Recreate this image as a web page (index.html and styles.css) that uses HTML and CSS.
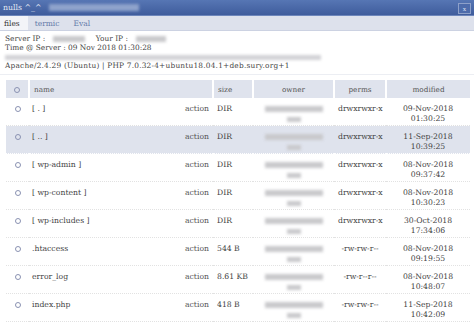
FILE: index.html
```html
<!DOCTYPE html>
<html>
<head>
<meta charset="utf-8">
<link rel="stylesheet" href="styles.css">
</head>
<body>
<div class="titlebar">
  <span class="title">nulls ^_^</span>
  <span class="blur title-blur"></span>
  <span class="close">x</span>
</div>
<div class="tabs">
  <span class="tab active">files</span>
  <span class="tab">termic</span>
  <span class="tab">Eval</span>
</div>
<div class="info">
  <div class="line">Server IP : <span class="blur ip"></span> Your IP : <span class="blur ip2"></span></div>
  <div class="line">Time @ Server : 09 Nov 2018 01:30:28</div>
  <div class="line"><span class="blur uname"></span></div>
  <div class="line wide">Apache/2.4.29 (Ubuntu) | PHP 7.0.32-4+ubuntu18.04.1+deb.sury.org+1</div>
</div>
<table class="files">
  <colgroup>
    <col class="c-radio"><col class="c-name"><col class="c-size"><col class="c-owner"><col class="c-perms"><col class="c-mod">
  </colgroup>
  <thead>
    <tr><th><span class="radio"></span></th><th class="left">name</th><th class="left">size</th><th>owner</th><th>perms</th><th>modified</th></tr>
  </thead>
  <tbody>
    <tr><td><span class="radio"></span></td><td class="name"><span>[ . ]</span><span class="act">action</span></td><td>DIR</td><td><div class="own"><span class="blur o1"></span><span class="blur o2"></span></div></td><td class="c">drwxrwxr-x</td><td class="c">09-Nov-2018<br>01:30:25</td></tr>
    <tr class="sel"><td><span class="radio"></span></td><td class="name"><span>[ .. ]</span><span class="act">action</span></td><td>DIR</td><td><div class="own"><span class="blur o1"></span><span class="blur o2"></span></div></td><td class="c">drwxrwxr-x</td><td class="c">11-Sep-2018<br>10:39:25</td></tr>
    <tr><td><span class="radio"></span></td><td class="name"><span>[ wp-admin ]</span><span class="act">action</span></td><td>DIR</td><td><div class="own"><span class="blur o1"></span><span class="blur o2"></span></div></td><td class="c">drwxrwxr-x</td><td class="c">08-Nov-2018<br>09:37:42</td></tr>
    <tr><td><span class="radio"></span></td><td class="name"><span>[ wp-content ]</span><span class="act">action</span></td><td>DIR</td><td><div class="own"><span class="blur o1"></span><span class="blur o2"></span></div></td><td class="c">drwxrwxr-x</td><td class="c">08-Nov-2018<br>10:30:23</td></tr>
    <tr><td><span class="radio"></span></td><td class="name"><span>[ wp-includes ]</span><span class="act">action</span></td><td>DIR</td><td><div class="own"><span class="blur o1"></span><span class="blur o2"></span></div></td><td class="c">drwxrwxr-x</td><td class="c">30-Oct-2018<br>17:34:06</td></tr>
    <tr><td><span class="radio"></span></td><td class="name"><span>.htaccess</span><span class="act">action</span></td><td>544 B</td><td><div class="own"><span class="blur o1"></span><span class="blur o2"></span></div></td><td class="c">-rw-rw-r--</td><td class="c">08-Nov-2018<br>09:19:55</td></tr>
    <tr><td><span class="radio"></span></td><td class="name"><span>error_log</span><span class="act">action</span></td><td>8.61 KB</td><td><div class="own"><span class="blur o1"></span><span class="blur o2"></span></div></td><td class="c">-rw-r--r--</td><td class="c">08-Nov-2018<br>10:48:07</td></tr>
    <tr><td><span class="radio"></span></td><td class="name"><span>index.php</span><span class="act">action</span></td><td>418 B</td><td><div class="own"><span class="blur o1"></span><span class="blur o2"></span></div></td><td class="c">-rw-rw-r--</td><td class="c">11-Sep-2018<br>10:42:09</td></tr>
  </tbody>
</table>
</body>
</html>
```
FILE: styles.css
```css
html, body {
  margin: 0;
  padding: 0;
  background: #fff;
}
body {
  font-family: "DejaVu Serif", serif;
  font-size: 7px;
  color: #444;
  overflow: hidden;
}
.blur {
  display: inline-block;
  background: #c9c9cc;
  filter: blur(1.5px);
  vertical-align: middle;
}
.titlebar {
  height: 15px;
  background: linear-gradient(#5676b4, #3f5c9c);
  display: flex;
  align-items: center;
  padding-left: 3px;
  position: relative;
  border-bottom: 1px solid #6d86bb;
}
.title {
  color: #e6ebf5;
  font-size: 7.8px;
  white-space: pre;
}
.title-blur {
  width: 90px;
  height: 7px;
  margin-left: 8px;
  background: #8fa3cc;
}
.close {
  position: absolute;
  right: 3px;
  top: 3px;
  width: 11px;
  height: 9px;
  border: 1px solid #8da0c9;
  color: #dde4f2;
  font-size: 6px;
  line-height: 9px;
  text-align: center;
  background: #4d6bab;
}
.tabs {
  height: 14px;
  background: #dde1ec;
  display: flex;
  align-items: stretch;
  border-bottom: 1px solid #ccd2e2;
}
.tab {
  display: flex;
  align-items: center;
  padding: 0 7px;
  color: #6379a8;
  font-size: 7.5px;
}
.tab.active {
  background: #f3f4f8;
  color: #333;
  padding: 0 8px 0 4px;
}
.info {
  padding: 3px 5px 4px;
  border-bottom: 1px solid #eceef3;
  margin-bottom: 5px;
}
.line {
  height: 9px;
  line-height: 9px;
  font-size: 7.4px;
  white-space: nowrap;
}
.line.wide { letter-spacing: 0.2px; }
.ip { width: 32px; height: 6px; margin: 0 8px 0 6px; }
.ip2 { width: 30px; height: 6px; margin-left: 6px; }
.uname { width: 316px; height: 5px; background: #d2d2d6; }
.files {
  margin-left: 6px;
  width: 464px;
  border-collapse: collapse;
  table-layout: fixed;
}
.c-radio { width: 23px; }
.c-name { width: 184px; }
.c-size { width: 40px; }
.c-owner { width: 81px; }
.c-perms { width: 52px; }
.c-mod { width: 84px; }
th {
  height: 18px;
  padding: 0 4px;
  background: #dfe3ed;
  font-weight: normal;
  color: #555;
  border-left: 2px solid #fff;
  text-align: center;
  font-size: 7.3px;
}
th:first-child { border-left: none; }
th.left { text-align: left; }
td {
  height: 21px;
  padding: 6px 4px 0;
  border-bottom: 1px dotted #e2e2e2;
  vertical-align: top;
  font-size: 7.7px;
  line-height: 10px;
  color: #444;
  white-space: nowrap;
}
td:first-child, th:first-child { text-align: center; padding-left: 0; padding-right: 0; }
tr.sel td { background: #dfe3ed; border-bottom-color: #fff; }
td.c { text-align: center; }
td.name { padding-left: 3px; }
.name span:first-child { float: left; }
.act { float: right; color: #555; }
.radio {
  display: inline-block;
  width: 4px;
  height: 4px;
  border: 1px solid #8a92b2;
  border-radius: 50%;
  vertical-align: middle;
}
.own {
  display: flex;
  flex-direction: column;
  align-items: center;
  gap: 5px;
  padding-top: 2px;
}
.o1 { width: 58px; height: 6px; }
.o2 { width: 14px; height: 5px; }
```
